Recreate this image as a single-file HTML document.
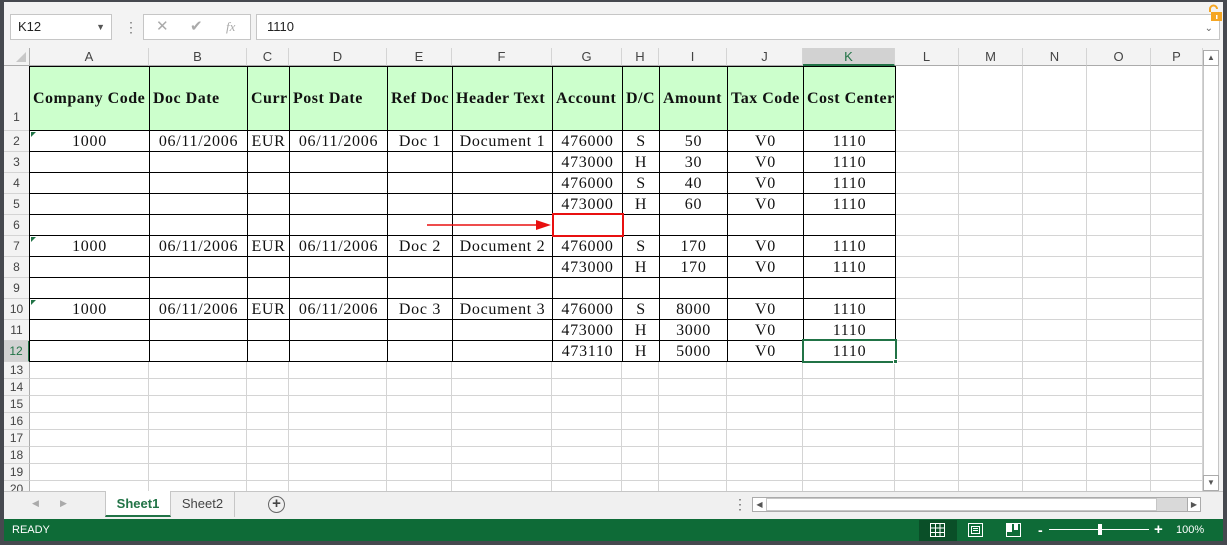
<!DOCTYPE html>
<html><head><meta charset="utf-8"><style>
*{box-sizing:border-box;margin:0;padding:0}
body{width:1227px;height:545px;overflow:hidden;background:#46494f;font-family:"Liberation Sans",sans-serif;position:relative}
#win{position:absolute;left:4px;top:2px;width:1219px;height:539px;background:#f3f3f3;overflow:hidden}
.abs{position:absolute}
.vl{position:absolute;width:1px;background:#d4d4d4}
.hl{position:absolute;height:1px;background:#d4d4d4}
.ch{position:absolute;top:46px;height:18px;font-size:13px;color:#444;text-align:center;line-height:18px;border-right:1px solid #d4d4d4;border-bottom:1px solid #ababab}
.rh{position:absolute;left:0;width:26px;font-size:12px;color:#444;text-align:center;border-bottom:1px solid #d4d4d4;border-right:1px solid #ababab;background:#f3f3f3}
table{position:absolute;left:25px;top:64px;border-collapse:separate;border-spacing:0;table-layout:fixed;border-left:1px solid #000;border-top:1px solid #000;font-family:"Liberation Serif",serif;font-size:16px;letter-spacing:0.7px;color:#111}
td{border-right:1px solid #000;border-bottom:1px solid #000;height:21px;text-align:center;padding:0;white-space:nowrap;overflow:hidden;line-height:19px}
tr.h td{height:64px;background:#ccffcc;font-weight:bold;text-align:left;padding-left:3px;font-size:16px;letter-spacing:0.5px}
.tri{position:absolute;width:0;height:0;border-top:5px solid #217346;border-right:5px solid transparent}
</style></head><body>
<div id="win">
<div class="abs" style="left:6px;top:12px;width:102px;height:26px;background:#fff;border:1px solid #c6c6c6;font-size:13px;line-height:24px;padding-left:7px;color:#222">K12<span style="position:absolute;right:6px;top:0;font-size:9px;color:#555">&#9660;</span></div>
<div class="abs" style="left:120px;top:16px;font-size:14px;color:#777;line-height:18px">&#8942;</div>
<div class="abs" style="left:139px;top:12px;width:108px;height:26px;background:#fff;border:1px solid #c6c6c6;color:#aaa;font-size:15px;line-height:24px"><span style="position:absolute;left:12px">&#10005;</span><span style="position:absolute;left:46px">&#10004;</span><span style="position:absolute;left:82px;font-family:'Liberation Serif',serif;font-style:italic;font-size:13px">fx</span></div>
<div class="abs" style="left:252px;top:12px;width:964px;height:26px;background:#fff;border:1px solid #c6c6c6;font-size:13px;line-height:24px;padding-left:10px;color:#222">1110<span style="position:absolute;right:6px;top:2px;font-size:10px;color:#666">&#8964;</span></div>
<svg class="abs" style="left:1201px;top:2px" width="18" height="18" viewBox="0 0 18 18"><path d="M5 8V5a3.5 3.5 0 0 1 7 0" fill="none" stroke="#f5a623" stroke-width="2"/><rect x="6" y="8" width="11" height="9" fill="#f5a623"/><rect x="11" y="11" width="1.5" height="4" fill="#fff"/></svg>
<div class="abs" style="left:26px;top:64px;width:1173px;height:425px;background:#fff"></div>
<div class="abs" style="left:0;top:46px;width:26px;height:18px;border-right:1px solid #ababab;border-bottom:1px solid #ababab"><div style="position:absolute;right:3px;bottom:3px;width:0;height:0;border-left:10px solid transparent;border-bottom:10px solid #c8c8c8"></div></div>
<div class="ch" style="left:26px;width:119px">A</div>
<div class="ch" style="left:145px;width:98px">B</div>
<div class="ch" style="left:243px;width:42px">C</div>
<div class="ch" style="left:285px;width:98px">D</div>
<div class="ch" style="left:383px;width:65px">E</div>
<div class="ch" style="left:448px;width:100px">F</div>
<div class="ch" style="left:548px;width:70px">G</div>
<div class="ch" style="left:618px;width:37px">H</div>
<div class="ch" style="left:655px;width:68px">I</div>
<div class="ch" style="left:723px;width:76px">J</div>
<div class="ch" style="left:799px;width:92px;background:#d2d2d2;color:#217346;border-bottom:2px solid #217346">K</div>
<div class="ch" style="left:891px;width:64px">L</div>
<div class="ch" style="left:955px;width:64px">M</div>
<div class="ch" style="left:1019px;width:64px">N</div>
<div class="ch" style="left:1083px;width:64px">O</div>
<div class="ch" style="left:1147px;width:52px">P</div>
<div class="vl" style="left:954px;top:64px;height:425px"></div>
<div class="vl" style="left:1018px;top:64px;height:425px"></div>
<div class="vl" style="left:1082px;top:64px;height:425px"></div>
<div class="vl" style="left:1146px;top:64px;height:425px"></div>
<div class="vl" style="left:1198px;top:64px;height:425px"></div>
<div class="vl" style="left:144px;top:360px;height:130px"></div>
<div class="vl" style="left:242px;top:360px;height:130px"></div>
<div class="vl" style="left:284px;top:360px;height:130px"></div>
<div class="vl" style="left:382px;top:360px;height:130px"></div>
<div class="vl" style="left:447px;top:360px;height:130px"></div>
<div class="vl" style="left:547px;top:360px;height:130px"></div>
<div class="vl" style="left:617px;top:360px;height:130px"></div>
<div class="vl" style="left:654px;top:360px;height:130px"></div>
<div class="vl" style="left:722px;top:360px;height:130px"></div>
<div class="vl" style="left:798px;top:360px;height:130px"></div>
<div class="vl" style="left:890px;top:360px;height:130px"></div>
<div class="hl" style="left:891px;top:128px;width:308px"></div>
<div class="hl" style="left:891px;top:149px;width:308px"></div>
<div class="hl" style="left:891px;top:170px;width:308px"></div>
<div class="hl" style="left:891px;top:191px;width:308px"></div>
<div class="hl" style="left:891px;top:212px;width:308px"></div>
<div class="hl" style="left:891px;top:233px;width:308px"></div>
<div class="hl" style="left:891px;top:254px;width:308px"></div>
<div class="hl" style="left:891px;top:275px;width:308px"></div>
<div class="hl" style="left:891px;top:296px;width:308px"></div>
<div class="hl" style="left:891px;top:317px;width:308px"></div>
<div class="hl" style="left:891px;top:338px;width:308px"></div>
<div class="hl" style="left:891px;top:359px;width:308px"></div>
<div class="hl" style="left:26px;top:376px;width:1173px"></div>
<div class="hl" style="left:26px;top:393px;width:1173px"></div>
<div class="hl" style="left:26px;top:410px;width:1173px"></div>
<div class="hl" style="left:26px;top:427px;width:1173px"></div>
<div class="hl" style="left:26px;top:444px;width:1173px"></div>
<div class="hl" style="left:26px;top:461px;width:1173px"></div>
<div class="hl" style="left:26px;top:478px;width:1173px"></div>
<div class="rh" style="top:64px;height:65px;line-height:102px">1</div>
<div class="rh" style="top:129px;height:21px;line-height:21px">2</div>
<div class="rh" style="top:150px;height:21px;line-height:21px">3</div>
<div class="rh" style="top:171px;height:21px;line-height:21px">4</div>
<div class="rh" style="top:192px;height:21px;line-height:21px">5</div>
<div class="rh" style="top:213px;height:21px;line-height:21px">6</div>
<div class="rh" style="top:234px;height:21px;line-height:21px">7</div>
<div class="rh" style="top:255px;height:21px;line-height:21px">8</div>
<div class="rh" style="top:276px;height:21px;line-height:21px">9</div>
<div class="rh" style="top:297px;height:21px;line-height:21px">10</div>
<div class="rh" style="top:318px;height:21px;line-height:21px">11</div>
<div class="rh" style="top:339px;height:21px;line-height:21px;background:#d2d2d2;color:#217346;border-right:2px solid #217346">12</div>
<div class="rh" style="top:360px;height:17px;line-height:17px">13</div>
<div class="rh" style="top:377px;height:17px;line-height:17px">14</div>
<div class="rh" style="top:394px;height:17px;line-height:17px">15</div>
<div class="rh" style="top:411px;height:17px;line-height:17px">16</div>
<div class="rh" style="top:428px;height:17px;line-height:17px">17</div>
<div class="rh" style="top:445px;height:17px;line-height:17px">18</div>
<div class="rh" style="top:462px;height:17px;line-height:17px">19</div>
<div class="rh" style="top:479px;height:17px;line-height:17px">20</div>
<table>
<colgroup><col style="width:120px"><col style="width:98px"><col style="width:42px"><col style="width:98px"><col style="width:65px"><col style="width:100px"><col style="width:70px"><col style="width:37px"><col style="width:68px"><col style="width:76px"><col style="width:92px"></colgroup>
<tr class="h"><td>Company Code</td><td>Doc Date</td><td>Curr</td><td>Post Date</td><td>Ref Doc</td><td>Header Text</td><td>Account</td><td>D/C</td><td>Amount</td><td>Tax Code</td><td>Cost Center</td></tr>
<tr><td>1000</td><td>06/11/2006</td><td>EUR</td><td>06/11/2006</td><td>Doc 1</td><td>Document 1</td><td>476000</td><td>S</td><td>50</td><td>V0</td><td>1110</td></tr>
<tr><td></td><td></td><td></td><td></td><td></td><td></td><td>473000</td><td>H</td><td>30</td><td>V0</td><td>1110</td></tr>
<tr><td></td><td></td><td></td><td></td><td></td><td></td><td>476000</td><td>S</td><td>40</td><td>V0</td><td>1110</td></tr>
<tr><td></td><td></td><td></td><td></td><td></td><td></td><td>473000</td><td>H</td><td>60</td><td>V0</td><td>1110</td></tr>
<tr><td></td><td></td><td></td><td></td><td></td><td></td><td></td><td></td><td></td><td></td><td></td></tr>
<tr><td>1000</td><td>06/11/2006</td><td>EUR</td><td>06/11/2006</td><td>Doc 2</td><td>Document 2</td><td>476000</td><td>S</td><td>170</td><td>V0</td><td>1110</td></tr>
<tr><td></td><td></td><td></td><td></td><td></td><td></td><td>473000</td><td>H</td><td>170</td><td>V0</td><td>1110</td></tr>
<tr><td></td><td></td><td></td><td></td><td></td><td></td><td></td><td></td><td></td><td></td><td></td></tr>
<tr><td>1000</td><td>06/11/2006</td><td>EUR</td><td>06/11/2006</td><td>Doc 3</td><td>Document 3</td><td>476000</td><td>S</td><td>8000</td><td>V0</td><td>1110</td></tr>
<tr><td></td><td></td><td></td><td></td><td></td><td></td><td>473000</td><td>H</td><td>3000</td><td>V0</td><td>1110</td></tr>
<tr><td></td><td></td><td></td><td></td><td></td><td></td><td>473110</td><td>H</td><td>5000</td><td>V0</td><td>1110</td></tr>
</table>
<div class="tri" style="left:27px;top:130px"></div>
<div class="tri" style="left:27px;top:235px"></div>
<div class="tri" style="left:27px;top:298px"></div>
<div class="abs" style="left:548px;top:211px;width:72px;height:24px;border:2px solid #e81010"></div>
<svg class="abs" style="left:420px;top:215px" width="130" height="16"><line x1="3" y1="8" x2="118" y2="8" stroke="#e81010" stroke-width="1.6"/><path d="M112 3 L127 8 L112 13 Z" fill="#e81010"/></svg>
<div class="abs" style="left:798px;top:337px;width:95px;height:24px;border:2px solid #217346"></div>
<div class="abs" style="left:889px;top:357px;width:5px;height:5px;background:#217346;border:1px solid #fff"></div>
<div class="abs" style="left:1199px;top:48px;width:16px;height:441px;background:#fff;border:1px solid #c6c6c6"></div>
<div class="abs" style="left:1199px;top:48px;width:16px;height:16px;background:#fff;border:1px solid #ababab;font-size:8px;color:#555;text-align:center;line-height:14px">&#9650;</div>
<div class="abs" style="left:1199px;top:473px;width:16px;height:16px;background:#fff;border:1px solid #ababab;font-size:8px;color:#555;text-align:center;line-height:14px">&#9660;</div>
<div class="abs" style="left:0;top:489px;width:1219px;height:28px;background:#f0f0f0;border-top:1px solid #c6c6c6"></div>
<div class="abs" style="left:28px;top:496px;font-size:9px;color:#aaa">&#9664;</div>
<div class="abs" style="left:56px;top:496px;font-size:9px;color:#aaa">&#9654;</div>
<div class="abs" style="left:101px;top:489px;width:66px;height:26px;background:#fff;border-left:1px solid #c6c6c6;border-right:1px solid #c6c6c6;border-bottom:2px solid #217346;font-size:13px;font-weight:bold;color:#217346;text-align:center;line-height:26px">Sheet1</div>
<div class="abs" style="left:167px;top:489px;width:64px;height:26px;font-size:13px;color:#444;text-align:center;line-height:26px;border-right:1px solid #c6c6c6">Sheet2</div>
<div class="abs" style="left:264px;top:494px;width:17px;height:17px;border:1.5px solid #666;border-radius:50%;font-size:15px;line-height:13px;text-align:center;color:#444;font-weight:bold">+</div>
<div class="abs" style="left:729px;top:494px;font-size:14px;color:#666">&#8942;</div>
<div class="abs" style="left:748px;top:495px;width:449px;height:15px;background:#d9d9d9;border:1px solid #ababab"></div>
<div class="abs" style="left:762px;top:496px;width:391px;height:13px;background:#fff;border:1px solid #c6c6c6"></div>
<div class="abs" style="left:749px;top:496px;width:13px;height:13px;background:#fff;font-size:8px;color:#555;text-align:center;line-height:13px">&#9664;</div>
<div class="abs" style="left:1183px;top:496px;width:13px;height:13px;background:#fff;border-left:1px solid #ababab;font-size:8px;color:#555;text-align:center;line-height:13px">&#9654;</div>
<div class="abs" style="left:0;top:517px;width:1219px;height:22px;background:#0e6b37;color:#fff;font-size:11px;line-height:22px">
<span style="position:absolute;left:8px">READY</span>
<div style="position:absolute;left:915px;top:1px;width:38px;height:21px;background:#0a4f28"></div>
<svg style="position:absolute;left:926px;top:4px" width="15" height="14"><path d="M.5 .5h14v13H.5zM5.5 .5v13M10 .5v13M.5 5h14M.5 9.5h14" stroke="#fff" fill="none"/></svg>
<svg style="position:absolute;left:964px;top:4px" width="15" height="14"><path d="M.5 .5h14v13H.5zM3.5 3.5h8v7h-8zM5 5.5h5M5 7.5h5" stroke="#fff" fill="none"/></svg>
<svg style="position:absolute;left:1002px;top:4px" width="15" height="14"><path d="M.5 .5h14v13H.5z" stroke="#fff" fill="none"/><path d="M1 1h5v8H1zM8 1h4v6H8z" fill="#fff"/></svg>
<span style="position:absolute;left:1034px;font-size:14px;font-weight:bold">-</span>
<div style="position:absolute;left:1045px;top:10px;width:100px;height:1px;background:#fff"></div>
<div style="position:absolute;left:1094px;top:5px;width:4px;height:11px;background:#fff"></div>
<span style="position:absolute;left:1150px;font-size:15px;font-weight:bold">+</span>
<span style="position:absolute;left:1172px">100%</span>
</div>
</div>
</body></html>
